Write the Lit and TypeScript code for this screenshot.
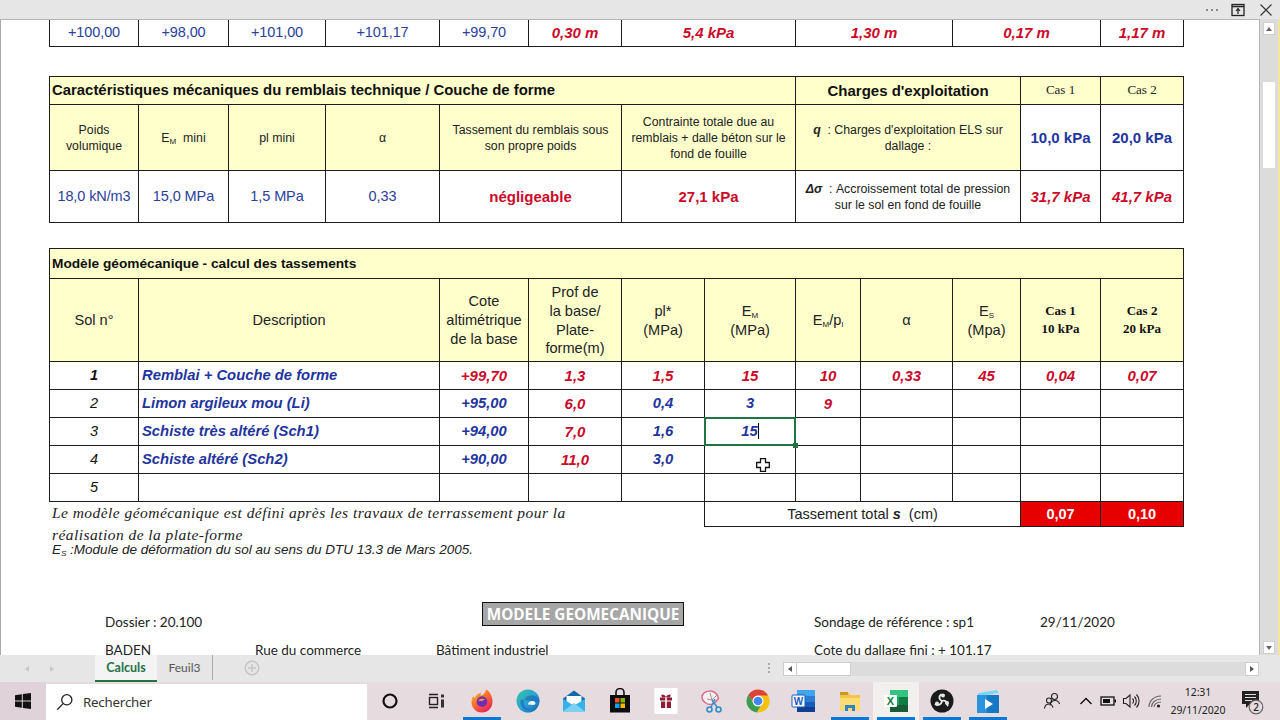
import { LitElement, html, css, svg } from "lit";
import { customElement } from "lit/decorators.js";

const COLS = [89, 90, 97, 114, 89, 93, 83, 91, 65, 92, 68, 80, 83];
const colgroup = html`<colgroup>${COLS.map((w) => html`<col style="width:${w}px" />`)}</colgroup>`;

const icon = (w: number, h: number, body: unknown) =>
  html`<svg width=${w} height=${h} viewBox="0 0 ${w} ${h}" xmlns="http://www.w3.org/2000/svg">${body}</svg>`;

const ICONS = {
  circle: icon(24, 24, svg`<circle cx="12" cy="12" r="6.5" fill="none" stroke="#111" stroke-width="2.2"/>`),
  task: icon(24, 24, svg`<g fill="none" stroke="#222" stroke-width="1.4"><path d="M5 5.5h9M5 18.5h9"/><rect x="5.5" y="8.5" width="8" height="7"/></g><path d="M17 5.5h3v3h-3zM17 10.5h3v8h-3z" fill="#333"/>`),
  firefox: icon(26, 26, svg`<defs><linearGradient id="ff" x1="0" y1="0" x2="0.7" y2="1"><stop offset="0" stop-color="#ffd13a"/><stop offset="0.45" stop-color="#ff7a28"/><stop offset="1" stop-color="#e5215f"/></linearGradient></defs><path d="M13 24.5C6.5 24.5 2.5 19.6 2.5 14c0-2.5.8-4.6 2-6.2.2 1 .6 1.7 1.2 2.2C6.8 7 9.500 5 12.500 4.500c-.8 1.200-1 2.200-.8 3 3-.6 5-3.500 5.300-6.300 3.500 2.300 6.500 6.500 6.500 12.300 0 6.500-4.500 11-10.500 11z" fill="url(#ff)"/><circle cx="13" cy="13.500" r="5.300" fill="#6d2fb0"/><path d="M9 13c1.500-2.500 5-3 7.500-.8-1.500-.4-2.800 0-3.300 1-.9-.5-2.500-.7-4.200-.2z" fill="#ff9a3c"/>`),
  edge: icon(26, 26, svg`<defs><linearGradient id="ed" x1="0" y1="0" x2="1" y2="1"><stop offset="0" stop-color="#36c6a0"/><stop offset="0.55" stop-color="#2b9fd8"/><stop offset="1" stop-color="#1560a8"/></linearGradient></defs><circle cx="13" cy="13" r="11.500" fill="url(#ed)"/><path d="M24.500 14c0-4-4-6.500-8-6.500-5 0-8 3.500-7.500 8 .4 3.500 3.500 6 7 6 .5 0 1 0 1.500-.2-6 3-12-1-12-7 0-1 .2-2 .5-2.800" fill="#1a6fb8" opacity=".7"/><path d="M13 16.500c0-2.500 2.500-4 5-3.500 2.300.5 3 2.200 2 3.500-.5.600-4 .4-7 0z" fill="#e8f4ec"/>`),
  mail: icon(26, 26, svg`<path d="M2 10.500 13 2.500l11 8v2L13 18 2 12.500z" fill="#0f6cab"/><path d="M5.500 8h15v7L13 18.500 5.500 15z" fill="#fff"/><path d="M2 11v12.500h22V11l-11 6.500z" fill="#34b3ea"/><path d="M2 23.500 13 15l11 8.500z" fill="#7dd0f3"/>`),
  store: icon(26, 26, svg`<path d="M9 7V4.500a4 4 0 0 1 8 0V7" fill="none" stroke="#111" stroke-width="1.600"/><rect x="3" y="7" width="20" height="17.500" fill="#0d0d0d"/><rect x="8" y="10" width="4.500" height="4.500" fill="#f25022"/><rect x="13.500" y="10" width="4.500" height="4.500" fill="#7fba00"/><rect x="8" y="15.500" width="4.500" height="4.500" fill="#00a4ef"/><rect x="13.500" y="15.500" width="4.500" height="4.500" fill="#ffb900"/>`),
  gift: icon(24, 28, svg`<rect x="0.500" y="1" width="23" height="26" fill="#fff"/><path d="M6 10.500h12v3H6zM7 14.500h10V21H7z" fill="#8e1c34"/><path d="M11.200 10.500h1.600V21h-1.600z" fill="#fff"/><path d="M12 10c-2-3-5-3-4.500-1s3 1.500 4.500 1c1.500.5 4 1 4.500-1S14 7 12 10z" fill="#8e1c34"/>`),
  snip: icon(28, 28, svg`<path d="M4 9c2-5 8-6 12-4 3 1.500 4 4 4.500 6.500-2 3-4 5-7 6-4 .5-10-3-9.500-8.500z" fill="#fbeef0" stroke="#d8708a" stroke-width="1.500"/><path d="M12 6l2 7M9 12l5 1M19 8l-5 5" stroke="#999" stroke-width="1"/><path d="M14 13l5 7M17 12l-4 8" stroke="#3a8fc8" stroke-width="1.500"/><circle cx="11.500" cy="22.500" r="2.500" fill="none" stroke="#2f8ecb" stroke-width="1.600"/><circle cx="20.500" cy="22.500" r="2.500" fill="none" stroke="#2f8ecb" stroke-width="1.600"/>`),
  chrome: icon(26, 26, svg`<path d="M13 13 23.200 7.500A11.500 11.500 0 0 0 3.400 6.700L8 14z" fill="#db4437"/><path d="M13 13 8 14 3.400 6.700A11.500 11.500 0 0 0 12 24.500L17 16z" fill="#3c9d50"/><path d="M13 13 17 16 12 24.500A11.500 11.500 0 0 0 23.200 7.500H13z" fill="#f4c20d"/><circle cx="13" cy="13" r="5.500" fill="#fff"/><circle cx="13" cy="13" r="4.300" fill="#4285f4"/>`),
  word: icon(26, 26, svg`<rect x="6" y="2" width="18" height="22" rx="1" fill="#2b7cd3"/><rect x="6" y="2" width="18" height="6" fill="#41a5ee"/><rect x="6" y="14" width="18" height="5" fill="#185abd"/><rect x="6" y="19" width="18" height="5" fill="#103f91"/><rect x="1" y="7" width="13" height="12" rx="1" fill="#fff" stroke="#185abd"/><text x="7.500" y="16.500" text-anchor="middle" font-family="Liberation Sans" font-weight="700" font-size="10" fill="#185abd">W</text>`),
  files: icon(26, 26, svg`<path d="M3 4h8l2 3h10v16H3z" fill="#f2c544"/><path d="M3 4h8v3H3z" fill="#c99a1f"/><rect x="3" y="10" width="20" height="13" fill="#fbdc74"/><path d="M8 23v-6h10v6h-3v-3h-4v3z" fill="#2d83c7"/>`),
  excel: icon(26, 26, svg`<rect x="7" y="2" width="18" height="22" rx="1" fill="#21a366"/><rect x="7" y="2" width="9" height="7" fill="#33c481"/><rect x="16" y="2" width="9" height="7" fill="#33c481"/><rect x="16" y="9" width="9" height="8" fill="#107c41"/><rect x="7" y="17" width="18" height="7" fill="#185c37"/><rect x="1" y="7" width="13" height="12" rx="1" fill="#fff"/><text x="7.500" y="16.800" text-anchor="middle" font-family="Liberation Sans" font-weight="700" font-size="11" fill="#107c41">X</text>`),
  obs: icon(26, 26, svg`<circle cx="13" cy="13" r="11.500" fill="#1a1a1a"/><g fill="none" stroke="#e8e8e8" stroke-width="1.800" stroke-linecap="round"><path d="M13 13C10 12 9.500 8.500 12 6.500"/><path d="M13 13C16 12 19 14 18.500 17.500"/><path d="M13 13C12.500 16 9.500 18 6.500 16.500"/></g><circle cx="14" cy="7.500" r="2" fill="#e8e8e8"/><circle cx="18" cy="15" r="2" fill="#e8e8e8"/><circle cx="8" cy="15.500" r="2" fill="#e8e8e8"/>`),
  movie: icon(26, 28, svg`<path d="M3 6 22 3l2 3L4 9z" fill="#7dd4f5"/><rect x="2" y="8" width="22" height="18" fill="#1478c4"/><path d="M2 8h10v18H2z" fill="#2a93de"/><path d="M10 12v10l8-5z" fill="#fff"/>`),
  people: icon(20, 20, svg`<g fill="none" stroke="#222" stroke-width="1.100"><circle cx="12.500" cy="5.500" r="3"/><path d="M8 14.500c.5-3 2.500-5 5-5s4 1.500 4.500 3.500"/><circle cx="7" cy="9.500" r="2.500"/><path d="M2.500 17.500c.3-2.500 2-4.500 4.500-4.500s3.500 2 4 3.500"/></g>`),
  chevron: icon(16, 12, svg`<path d="M2.500 9 8 3.500 13.500 9" fill="none" stroke="#111" stroke-width="1.400"/>`),
  battery: icon(18, 12, svg`<rect x="1" y="2" width="13" height="8" fill="none" stroke="#111" stroke-width="1.300"/><rect x="3" y="4" width="7" height="4" fill="#111"/><rect x="14.500" y="4.500" width="1.500" height="3" fill="#111"/>`),
  volume: icon(18, 16, svg`<g fill="none" stroke="#222" stroke-width="1.100"><path d="M1.500 5.500h2.500l4-3.500v12l-4-3.500H1.500z"/><path d="M10.500 5.500a3.500 3.500 0 0 1 0 5M12.500 3.500a6.500 6.500 0 0 1 0 9M14.500 1.500a9.500 9.500 0 0 1 0 13"/></g>`),
  wifi: icon(18, 16, svg`<g fill="none" stroke="#666" stroke-width="1.100"><path d="M3 14c0-6 5-11 12-11M5.500 14c0-4 4-8 9.500-8M8 14c0-2.500 2.500-5 7-5"/></g><circle cx="12.500" cy="13" r="1.600" fill="#222"/>`),
  notif: icon(28, 26, svg`<path d="M3 2h17v13h-9l-4 4v-4H3z" fill="#222"/><path d="M6 5.500h11M6 8.500h11M6 11.500h7" stroke="#e6dce0" stroke-width="1"/><circle cx="17" cy="18" r="6.800" fill="#e6dce0" stroke="#666" stroke-width="1.200"/>`),
  win: icon(16, 16, svg`<path d="M0 2.200 6.800 1.200v6.300H0zM7.800 1 16 0v7.500H7.800zM0 8.500h6.800v6.300L0 13.800zM7.800 8.500H16V16l-8.200-1.100z" fill="#111"/>`),
  search: icon(18, 18, svg`<circle cx="10.800" cy="6.800" r="5.100" fill="none" stroke="#222" stroke-width="1.300"/><path d="M7 10.600 1.200 16.800" stroke="#222" stroke-width="1.300"/>`),
  restore: icon(14, 14, svg`<rect x="1" y="1.500" width="12" height="11" fill="none" stroke="#222" stroke-width="1.300"/><path d="M1 3.500h12" stroke="#222" stroke-width="1.500"/><path d="M7 11V6M5 8l2-2.500L9 8" fill="none" stroke="#222" stroke-width="1.200"/>`),
  close: icon(14, 14, svg`<path d="M1.500 1.500l11 11M12.500 1.500l-11 11" stroke="#333" stroke-width="1.100"/>`),
  pointer: icon(14, 14, svg`<path d="M4.500.7h5v3.800h3.800v5H9.500v3.800h-5V9.500H.7v-5h3.800z" fill="#fff" stroke="#111" stroke-width="1.300"/>`),
  plus: icon(16, 16, svg`<circle cx="8" cy="8" r="6.800" fill="none" stroke="#c4c4c4" stroke-width="1.400"/><path d="M8 4v8M4 8h8" stroke="#c4c4c4" stroke-width="1.400"/>`),
};

@customElement("app-root")
export class AppRoot extends LitElement {
  static styles = css`
    :host { display: block; width: 1280px; height: 720px; overflow: hidden; font-family: "Liberation Sans", Arial, sans-serif; }
    .page { display: flex; flex-direction: column; height: 720px; background: #fff; }
    .topbar { height: 19px; flex: none; background: #e6e6e6; display: flex; align-items: center; justify-content: flex-end; padding-right: 7px; box-sizing: border-box; }
    .topbar .dots { display: flex; gap: 3px; margin-right: 13px; }
    .topbar .dots i { width: 2px; height: 2px; background: #888; display: block; }
    .topbar .close { margin-left: 14px; display: flex; }
    .topbar .restore { display: flex; }
    .middle { flex: none; height: 636px; display: flex; }
    .sheet { position: relative; flex: none; width: 1260px; overflow: hidden; box-sizing: border-box; border-top: 1px solid #b5b5b5; border-left: 1px solid #aaa; border-right: 1px solid #b5b5b5; padding-left: 48px; background: #fff; }
    table { border-collapse: collapse; table-layout: fixed; width: 1134px; }
    td { border: 1px solid #1c1c1c; padding: 0; text-align: center; vertical-align: middle; overflow: hidden; }
    .y { background: #ffffcc; color: #222; }
    .t0 { margin-top: -1px; }
    .t0 td { border-top: none; }
    .t0 tr { height: 27px; }
    .t1 { margin-top: 29px; }
    .t2 { margin-top: 25px; }
    .r28 { height: 28px; }
    .r66 { height: 66px; }
    .r52 { height: 52px; }
    .r31 { height: 30px; }
    .r83 { height: 83px; }
    .blue { color: #2b409d; font-size: 14.5px; letter-spacing: -0.1px; }
    .redbi { color: #cb0a2a; font-size: 15px; font-weight: 700; font-style: italic; }
    .redb { color: #cb0a2a; font-size: 15px; font-weight: 700; }
    .blueb { color: #1f359d; font-size: 15px; font-weight: 700; }
    .bluebi { color: #1f359d; font-size: 14.8px; font-weight: 700; font-style: italic; }
    .h1 { font-size: 14.9px; font-weight: 700; color: #111; text-align: left; padding-left: 2px; }
    .h1c { font-size: 15px; font-weight: 700; color: #111; }
    .small { font-size: 12.3px; line-height: 16px; color: #222; padding-top: 2px; }
    .serif { font-family: "Liberation Serif", serif; font-size: 13px; color: #222; }
    .serifb { font-family: "Liberation Serif", serif; font-size: 13px; font-weight: 700; line-height: 18px; color: #111; }
    .title2 { font-size: 13.7px; font-weight: 700; color: #111; text-align: left; padding-left: 2px; }
    .hd { font-size: 14.6px; line-height: 18.7px; color: #222; padding-top: 2px; }
    .hd sub, .small sub { font-size: 8px; line-height: 0; vertical-align: -2px; }
    .num { font-size: 14.5px; font-style: italic; color: #111; }
    .numb { font-weight: 700; }
    .desc { text-align: left; padding-left: 3px; }
    .sel { position: relative; overflow: visible; }
    .selbox { position: absolute; inset: -1px; border: 2px solid #217346; }
    .handle { position: absolute; right: -3px; bottom: -3px; width: 5px; height: 5px; background: #217346; }
    .caret { border-right: 1px solid #000; }
    .ptr { position: absolute; left: 51px; top: 12px; display: flex; }
    .pcell { position: relative; overflow: visible; }
    .after { display: flex; align-items: flex-start; }
    .notes { width: 655px; flex: none; padding: 0 0 0 3px; box-sizing: border-box; }
    .n1 { width: 530px; font-family: "Liberation Serif", serif; font-style: italic; font-size: 15.5px; letter-spacing: 0.45px; line-height: 22px; color: #222; }
    .n2 { font-size: 13.5px; font-style: italic; line-height: 14px; color: #222; margin-top: -3px; }
    .n2 sub { font-size: 8px; line-height: 0; vertical-align: -2px; }
    .total { display: grid; grid-template-columns: 315px 80px 83px; height: 25px; border: 1px solid #1c1c1c; border-top: none; box-sizing: border-box; width: 480px; }
    .total div { display: flex; align-items: center; justify-content: center; font-size: 14.5px; color: #222; }
    .total .red { background: #e60000; color: #fff; font-weight: 700; border-left: 1px solid #1c1c1c; }
    .foot { display: grid; grid-template-columns: 150px 181px 378px 226px 100px; margin: 45px 0 0 56px; font-family: Lato, sans-serif; font-size: 13.5px; color: #222; row-gap: 12px; align-items: end; }
    .foot > span { white-space: nowrap; }
    .banner { display: block; margin: 0 0 4px 46px; width: 202px; height: 24px; line-height: 22px; box-sizing: border-box; background: #a6a6a6; border: 1px solid #111; color: #fff; font-family: "Open Sans", sans-serif; font-size: 15.3px; font-weight: 700; text-align: center; white-space: nowrap; }
    .scroll { flex: 1; display: flex; flex-direction: column; align-items: center; background: #dcdcdc; padding: 3px 0 1px; box-sizing: border-box; border-right: 2px solid #efe79a; }
    .sbtn { width: 12px; height: 13px; background: #fff; border: 1px solid #d0d0d0; box-sizing: border-box; display: flex; align-items: center; justify-content: center; flex: none; }
    .up { width: 0; height: 0; border-left: 3.5px solid transparent; border-right: 3.5px solid transparent; border-bottom: 4px solid #666; }
    .down { width: 0; height: 0; border-left: 3.5px solid transparent; border-right: 3.5px solid transparent; border-top: 4px solid #666; }
    .thumb { width: 12px; height: 86px; background: #fff; margin-top: 47px; flex: none; }
    .spacer { flex: 1; }
    .tabs { flex: none; height: 27px; background: #e6e6e6; display: flex; align-items: stretch; font-family: Lato, sans-serif; font-size: 12px; position: relative; }
    .tabarrows { width: 95px; flex: none; display: flex; align-items: center; gap: 21px; padding-left: 25px; box-sizing: border-box; }
    .tri-l { width: 0; height: 0; border-top: 3.500px solid transparent; border-bottom: 3.500px solid transparent; border-right: 4px solid #c8c8c8; }
    .tri-r { width: 0; height: 0; border-top: 3.500px solid transparent; border-bottom: 3.500px solid transparent; border-left: 4px solid #c8c8c8; }
    .tab { display: flex; align-items: center; justify-content: center; }
    .active { width: 62px; background: #f4f4f4; color: #217346; font-weight: 700; font-size: 12.5px; border-bottom: 2px solid #217346; height: 25px; box-sizing: content-box; }
    .tab2 { width: 55px; color: #555; height: 25px; border-right: 1px solid #aaa; }
    .addtab { margin-left: 31px; display: flex; align-items: center; height: 25px; }
    .hscroll { margin-left: auto; display: flex; align-items: center; height: 27px; padding-right: 21px; }
    .hdots { width: 2px; height: 12px; margin-right: 13px; background-image: linear-gradient(#aaa 2px, transparent 2px); background-size: 2px 4px; }
    .hbtn { width: 14px; height: 14px; background: #fff; border: 1px solid #ccc; box-sizing: border-box; display: flex; align-items: center; justify-content: center; }
    .hthumb { width: 54px; height: 14px; background: #fff; border: 1px solid #ccc; border-left: none; box-sizing: border-box; }
    .htrack { width: 394px; height: 14px; background: #dcdcdc; }
    .tl { width: 0; height: 0; border-top: 3.500px solid transparent; border-bottom: 3.500px solid transparent; border-right: 4px solid #555; }
    .tr { width: 0; height: 0; border-top: 3.500px solid transparent; border-bottom: 3.500px solid transparent; border-left: 4px solid #555; }
    .taskbar { flex: none; height: 38px; background: #e6dce0; display: flex; align-items: stretch; font-family: "Noto Sans", sans-serif; }
    .start { width: 46px; flex: none; display: flex; align-items: center; justify-content: center; background: #dfd3d9; }
    .searchbox { width: 321px; flex: none; background: #fff; display: flex; align-items: center; gap: 9px; box-sizing: border-box; font-size: 13.3px; letter-spacing: -0.2px; color: #333; margin-top: 2px; padding-left: 10px; }
    .ti { width: 46px; flex: none; display: flex; align-items: center; justify-content: center; box-sizing: border-box; position: relative; }
    .ti.run::after { content: ""; position: absolute; left: 4px; right: 4px; bottom: 0; height: 3px; background: #0a78d4; }
    .ti.cur { background: #f2efef; }
    .tray { margin-left: auto; display: flex; align-items: center; }
    .tray > * { flex: none; }
    .tr-people { margin-right: 16px; display: flex; }
    .tr-chev { margin-right: 6px; display: flex; }
    .tr-bat { margin-right: 4px; display: flex; }
    .tr-vol { margin-right: 6px; display: flex; }
    .tr-wifi { margin-right: 3px; display: flex; }
    .clock { width: 62px; text-align: center; font-size: 10.5px; letter-spacing: -0.1px; line-height: 18px; color: #222; margin-right: 10px; }
    .notif { width: 30px; position: relative; display: flex; margin-right: 11px; margin-top: 2px; }
    .notif b { position: absolute; left: 12px; top: 12px; width: 10px; text-align: center; font-size: 10px; line-height: 12px; font-weight: 500; color: #222; }
  `;

  render() {
    const empty = (n: number) => Array.from({ length: n }, () => html`<td></td>`);
    return html`
      <div class="page">
        <div class="topbar">
          <div class="dots"><i></i><i></i><i></i></div>
          <div class="restore">${ICONS.restore}</div>
          <div class="close">${ICONS.close}</div>
        </div>
        <div class="middle">
          <div class="sheet">
            <table class="t0">
              ${colgroup}
              <tr>
                <td class="blue">+100,00</td><td class="blue">+98,00</td><td class="blue">+101,00</td>
                <td class="blue">+101,17</td><td class="blue">+99,70</td><td class="redbi">0,30 m</td>
                <td class="redbi" colspan="2">5,4 kPa</td><td class="redbi" colspan="2">1,30 m</td>
                <td class="redbi" colspan="2">0,17 m</td><td class="redbi">1,17 m</td>
              </tr>
            </table>
            <table class="t1">
              ${colgroup}
              <tr class="r28">
                <td class="y h1" colspan="8">Caractéristiques mécaniques du remblais technique / Couche de forme</td>
                <td class="y h1c" colspan="3">Charges d'exploitation</td>
                <td class="y serif">Cas 1</td><td class="y serif">Cas 2</td>
              </tr>
              <tr class="r66">
                <td class="y small">Poids<br />volumique</td>
                <td class="y small">E<sub>M</sub>&nbsp; mini</td>
                <td class="y small">pl mini</td>
                <td class="y small">α</td>
                <td class="y small" colspan="2">Tassement du remblais sous<br />son propre poids</td>
                <td class="y small" colspan="2">Contrainte totale due au<br />remblais + dalle béton sur le<br />fond de fouille</td>
                <td class="y small" colspan="3"><b><i>q</i></b> &nbsp;: Charges d'exploitation ELS sur<br />dallage :</td>
                <td class="blueb">10,0 kPa</td><td class="blueb">20,0 kPa</td>
              </tr>
              <tr class="r52">
                <td class="blue">18,0 kN/m3</td><td class="blue">15,0 MPa</td><td class="blue">1,5 MPa</td><td class="blue">0,33</td>
                <td class="redb" colspan="2">négligeable</td>
                <td class="redb" colspan="2">27,1 kPa</td>
                <td class="small" colspan="3"><b><i>Δσ</i></b> &nbsp;: Accroissement total de pression<br />sur le sol en fond de fouille</td>
                <td class="redbi">31,7 kPa</td><td class="redbi">41,7 kPa</td>
              </tr>
            </table>
            <table class="t2">
              ${colgroup}
              <tr class="r31"><td class="y title2" colspan="13">Modèle géomécanique - calcul des tassements</td></tr>
              <tr class="r83">
                <td class="y hd">Sol n°</td>
                <td class="y hd" colspan="3">Description</td>
                <td class="y hd">Cote<br />altimétrique<br />de la base</td>
                <td class="y hd">Prof de<br />la base/<br />Plate-<br />forme(m)</td>
                <td class="y hd">pl*<br />(MPa)</td>
                <td class="y hd">E<sub>M</sub><br />(MPa)</td>
                <td class="y hd">E<sub>M</sub>/p<sub>l</sub></td>
                <td class="y hd">α</td>
                <td class="y hd">E<sub>S</sub><br />(Mpa)</td>
                <td class="y serifb">Cas 1<br />10 kPa</td>
                <td class="y serifb">Cas 2<br />20 kPa</td>
              </tr>
              <tr class="r28">
                <td class="num numb">1</td>
                <td class="bluebi desc" colspan="3">Remblai + Couche de forme</td>
                <td class="redbi">+99,70</td><td class="redbi">1,3</td><td class="redbi">1,5</td><td class="redbi">15</td><td class="redbi">10</td><td class="redbi">0,33</td><td class="redbi">45</td><td class="redbi">0,04</td><td class="redbi">0,07</td>
              </tr>
              <tr class="r28">
                <td class="num">2</td>
                <td class="bluebi desc" colspan="3">Limon argileux mou (Li)</td>
                <td class="bluebi">+95,00</td><td class="redbi">6,0</td><td class="bluebi">0,4</td><td class="bluebi">3</td><td class="redbi">9</td>${empty(4)}
              </tr>
              <tr class="r28">
                <td class="num">3</td>
                <td class="bluebi desc" colspan="3">Schiste très altéré (Sch1)</td>
                <td class="bluebi">+94,00</td><td class="redbi">7,0</td><td class="bluebi">1,6</td>
                <td class="bluebi sel"><span class="caret">15</span><div class="selbox"></div><div class="handle"></div></td>
                ${empty(5)}
              </tr>
              <tr class="r28">
                <td class="num">4</td>
                <td class="bluebi desc" colspan="3">Schiste altéré (Sch2)</td>
                <td class="bluebi">+90,00</td><td class="redbi">11,0</td><td class="bluebi">3,0</td>
                <td class="pcell"><div class="ptr">${ICONS.pointer}</div></td>
                ${empty(5)}
              </tr>
              <tr class="r28">
                <td class="num">5</td>
                <td colspan="3"></td>${empty(9)}
              </tr>
            </table>
            <div class="after">
              <div class="notes">
                <div class="n1">Le modèle géomécanique est défini après les travaux de terrassement pour la réalisation de la plate-forme</div>
                <div class="n2">E<sub>S</sub> :Module de déformation du sol au sens du DTU 13.3 de Mars 2005.</div>
              </div>
              <div class="total">
                <div>Tassement total&nbsp;<b><i>s</i></b>&nbsp; (cm)</div>
                <div class="red">0,07</div>
                <div class="red">0,10</div>
              </div>
            </div>
            <div class="foot">
              <span>Dossier : 20.100</span><span></span><span class="banner">MODELE GEOMECANIQUE</span><span>Sondage de référence : sp1</span><span>29/11/2020</span>
              <span>BADEN</span><span>Rue du commerce</span><span>Bâtiment industriel</span><span>Cote du dallage fini : + 101.17</span><span></span>
            </div>
          </div>
          <div class="scroll">
            <div class="sbtn"><div class="up"></div></div>
            <div class="thumb"></div>
            <div class="spacer"></div>
            <div class="sbtn"><div class="down"></div></div>
          </div>
        </div>
        <div class="tabs">
          <div class="tabarrows"><div class="tri-l"></div><div class="tri-r"></div></div>
          <div class="tab active">Calculs</div>
          <div class="tab tab2">Feuil3</div>
          <div class="addtab">${ICONS.plus}</div>
          <div class="hscroll">
            <div class="hdots"></div>
            <div class="hbtn"><div class="tl"></div></div>
            <div class="hthumb"></div>
            <div class="htrack"></div>
            <div class="hbtn"><div class="tr"></div></div>
          </div>
        </div>
        <div class="taskbar">
          <div class="start">${ICONS.win}</div>
          <div class="searchbox">${ICONS.search}<span>Rechercher</span></div>
          <div class="ti">${ICONS.circle}</div>
          <div class="ti">${ICONS.task}</div>
          <div class="ti run">${ICONS.firefox}</div>
          <div class="ti">${ICONS.edge}</div>
          <div class="ti">${ICONS.mail}</div>
          <div class="ti">${ICONS.store}</div>
          <div class="ti">${ICONS.gift}</div>
          <div class="ti">${ICONS.snip}</div>
          <div class="ti">${ICONS.chrome}</div>
          <div class="ti">${ICONS.word}</div>
          <div class="ti run">${ICONS.files}</div>
          <div class="ti run cur">${ICONS.excel}</div>
          <div class="ti run">${ICONS.obs}</div>
          <div class="ti run">${ICONS.movie}</div>
          <div class="tray">
            <div class="tr-people">${ICONS.people}</div>
            <div class="tr-chev">${ICONS.chevron}</div>
            <div class="tr-bat">${ICONS.battery}</div>
            <div class="tr-vol">${ICONS.volume}</div>
            <div class="tr-wifi">${ICONS.wifi}</div>
            <div class="clock">12:31<br />29/11/2020</div>
            <div class="notif">${ICONS.notif}<b>2</b></div>
          </div>
        </div>
      </div>
    `;
  }
}
